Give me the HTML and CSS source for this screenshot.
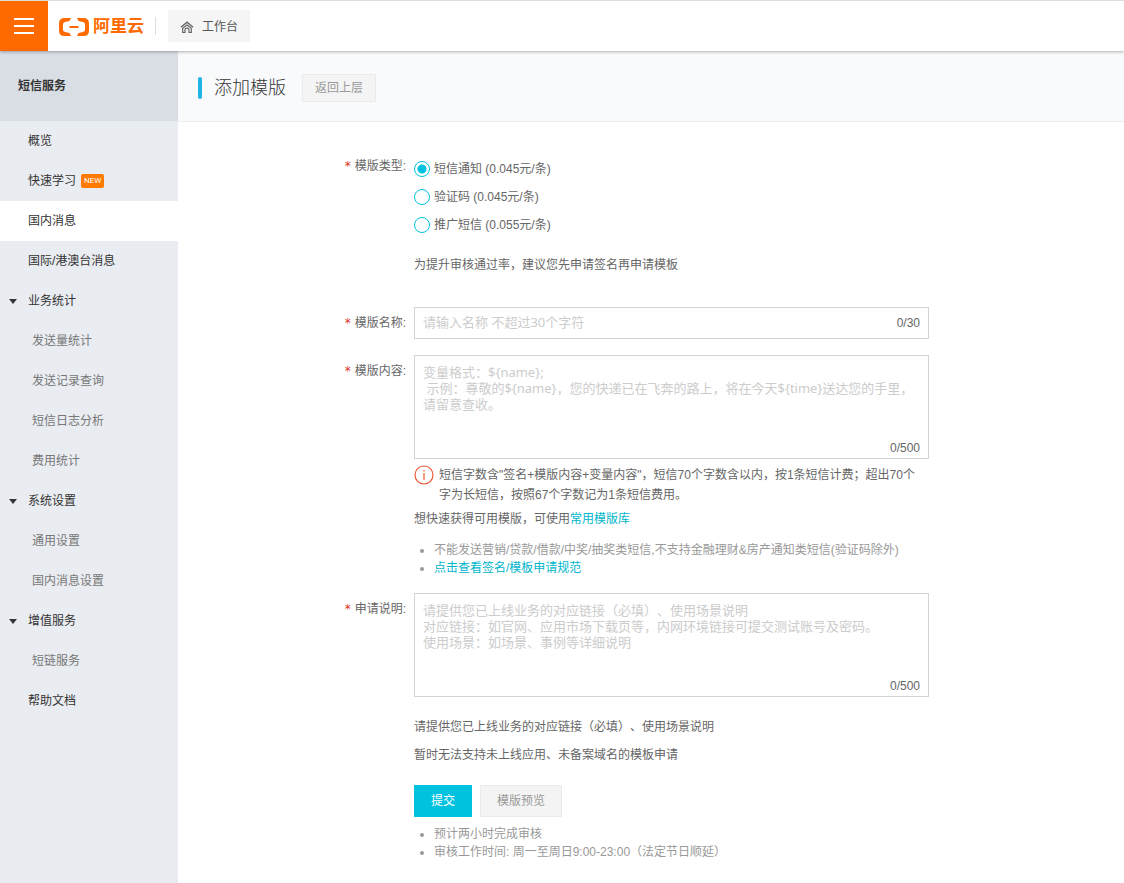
FILE: index.html
```html
<!DOCTYPE html>
<html lang="zh-CN">
<head>
<meta charset="utf-8">
<title>添加模版</title>
<link rel="stylesheet" href="styles.css">
</head>
<body>
<header class="topbar">
  <button class="menu-btn" type="button" aria-label="菜单">
    <svg width="20" height="18" viewBox="0 0 20 18"><path d="M0 2h20M0 9h20M0 16h20" stroke="#fff" stroke-width="2"/></svg>
  </button>
  <a class="brand" href="#">
    <svg width="30" height="18" viewBox="0 0 30 18" fill="#ff6a00">
      <path d="M12 0H5.500Q0 0 0 5.500V12.500Q0 18 5.500 18H12L10.500 15L6 14Q4 13.500 4 11.800V6.200Q4 4.500 6 4L10.500 3z"/>
      <path d="M18 0H24.500Q30 0 30 5.500V12.500Q30 18 24.500 18H18L19.500 15L24 14Q26 13.500 26 11.800V6.200Q26 4.500 24 4L19.500 3z"/>
      <path d="M10.500 8h9v2h-9z"/>
    </svg>
    <span>阿里云</span>
  </a>
  <span class="divider"></span>
  <a class="workbench" href="#">
    <svg width="14" height="14" viewBox="0 0 14 14" fill="none" stroke="#666">
      <path d="M1 7.300L7 2.200l6 5.100" stroke-width="1.500"/>
      <path d="M2.700 8.200v4.300H5V10.200Q5 8.200 7 8.200T9 10.200v2.300h2.300V8.200L7 4.900z" stroke-width="1.200"/>
    </svg>
    <span>工作台</span>
  </a>
</header>
<div class="layout">
  <nav class="sidebar">
    <h2 class="side-title">短信服务</h2>
    <a class="item" href="#">概览</a>
    <a class="item" href="#">快速学习<span class="new">NEW</span></a>
    <a class="item active" href="#">国内消息</a>
    <a class="item" href="#">国际/港澳台消息</a>
    <button class="item group" type="button">业务统计</button>
    <a class="item sub" href="#">发送量统计</a>
    <a class="item sub" href="#">发送记录查询</a>
    <a class="item sub" href="#">短信日志分析</a>
    <a class="item sub" href="#">费用统计</a>
    <button class="item group" type="button">系统设置</button>
    <a class="item sub" href="#">通用设置</a>
    <a class="item sub" href="#">国内消息设置</a>
    <button class="item group" type="button">增值服务</button>
    <a class="item sub" href="#">短链服务</a>
    <a class="item" href="#">帮助文档</a>
  </nav>
  <main class="main">
    <div class="page-head">
      <h1>添加模版</h1>
      <button class="btn btn-small" type="button">返回上层</button>
    </div>
    <form class="form">
      <div class="row" role="radiogroup" aria-labelledby="type-label">
        <span class="label label-type" id="type-label">模版类型:</span>
        <div class="field types">
          <label class="radio"><input type="radio" name="type" checked>短信通知 (0.045元/条)</label>
          <label class="radio"><input type="radio" name="type">验证码 (0.045元/条)</label>
          <label class="radio"><input type="radio" name="type">推广短信 (0.055元/条)</label>
          <p class="hint">为提升审核通过率，建议您先申请签名再申请模板</p>
        </div>
      </div>
      <div class="row row-name">
        <label class="label" for="name">模版名称:</label>
        <div class="field box">
          <input class="control" id="name" type="text" placeholder="请输入名称 不超过30个字符">
          <span class="count">0/30</span>
        </div>
      </div>
      <div class="row row-content">
        <label class="label" for="content">模版内容:</label>
        <div class="field">
          <div class="box">
            <textarea class="control area" id="content" placeholder="变量格式：${name};&#10; 示例：尊敬的${name}，您的快递已在飞奔的路上，将在今天${time}送达您的手里，请留意查收。"></textarea>
            <span class="count">0/500</span>
          </div>
          <div class="notice">
            <svg width="20" height="20" viewBox="0 0 20 20" fill="none" stroke="#f15533"><circle cx="10" cy="10" r="9" stroke-width="1.200"/><path d="M10 8v7M10 5v1.500" stroke-width="1.200"/></svg>
            <p>短信字数含"签名+模版内容+变量内容"，短信70个字数含以内，按1条短信计费；超出70个字为长短信，按照67个字数记为1条短信费用。</p>
          </div>
          <p class="library">想快速获得可用模版，可使用<a href="#">常用模版库</a></p>
          <ul class="notes">
            <li>不能发送营销/贷款/借款/中奖/抽奖类短信,不支持金融理财&amp;房产通知类短信(验证码除外)</li>
            <li><a href="#">点击查看签名/模板申请规范</a></li>
          </ul>
        </div>
      </div>
      <div class="row row-reason">
        <label class="label" for="reason">申请说明:</label>
        <div class="field">
          <div class="box">
            <textarea class="control area" id="reason" placeholder="请提供您已上线业务的对应链接（必填）、使用场景说明&#10;对应链接：如官网、应用市场下载页等，内网环境链接可提交测试账号及密码。&#10;使用场景：如场景、事例等详细说明"></textarea>
            <span class="count">0/500</span>
          </div>
          <div class="explain">
            <p>请提供您已上线业务的对应链接（必填）、使用场景说明</p>
            <p>暂时无法支持未上线应用、未备案域名的模板申请</p>
          </div>
          <div class="actions">
            <button class="btn btn-primary" type="submit">提交</button>
            <button class="btn" type="button">模版预览</button>
          </div>
          <ul class="notes">
            <li>预计两小时完成审核</li>
            <li>审核工作时间: 周一至周日9:00-23:00（法定节日顺延）</li>
          </ul>
        </div>
      </div>
    </form>
  </main>
</div>
</body>
</html>
```
FILE: styles.css
```css
* { box-sizing: border-box; }
body {
  margin: 0;
  min-height: 100vh;
  display: flex;
  flex-direction: column;
  font: 12px/20px "Liberation Sans", "Noto Sans CJK SC", sans-serif;
  text-spacing-trim: space-all;
  color: #666;
  background: #fff;
}
h1, h2, p, ul { margin: 0; padding: 0; }
a { color: #00b5cc; text-decoration: none; }
button, input, textarea { font: inherit; color: inherit; margin: 0; }
button { cursor: pointer; }

.topbar {
  position: relative;
  display: flex;
  align-items: center;
  height: 51px;
  border-top: 1px solid #ddd;
  background: #fff;
  box-shadow: 0 1px 3px rgba(0, 0, 0, .3);
}
.menu-btn {
  display: grid;
  place-items: center;
  width: 48px;
  align-self: stretch;
  padding: 0;
  border: 0;
  background: #ff6a00;
}
.brand {
  display: flex;
  align-items: center;
  gap: 4px;
  margin-left: 11px;
  padding-top: 1px;
  color: #ff6a00;
  font-size: 17px;
  font-weight: 700;
}
.divider { width: 1px; height: 18px; margin: 0 12px 0 11px; background: #ddd; }
.workbench {
  display: flex;
  align-items: center;
  gap: 8px;
  height: 32px;
  padding: 1px 12px 0;
  background: #f5f5f6;
  color: #555;
}

.layout { display: flex; flex: 1; }
.sidebar { flex: none; width: 178px; background: #e9ecf1; }
.side-title {
  height: 70px;
  padding-left: 18px;
  line-height: 70px;
  font-size: 12px;
  font-weight: 700;
  color: #333;
  background: #d9dde4;
}
.item {
  display: flex;
  align-items: center;
  width: 100%;
  height: 40px;
  padding: 0 0 0 28px;
  border: 0;
  background: none;
  color: #333;
}
.active { background: #fff; }
.sub { padding-left: 32px; color: #777; }
.group { padding-left: 9px; gap: 11px; }
.group::before {
  content: "";
  border: 4px solid transparent;
  border-top: 5px solid #333;
  border-bottom: 0;
}
.new {
  margin-left: 5px;
  padding: 0 3px;
  border-radius: 2px;
  background: #ff7a00;
  color: #fff;
  font: 8px/14px Roboto, sans-serif;
}

.main { flex: 1; min-width: 0; }
.page-head {
  display: flex;
  align-items: center;
  gap: 16px;
  height: 71px;
  padding: 4px 0 0 20px;
  border-bottom: 1px solid #e9ecf0;
  background: #f9fafc;
}
h1 {
  display: flex;
  align-items: center;
  gap: 12px;
  font-size: 18px;
  font-weight: 300;
  line-height: 28px;
  color: #333;
}
h1::before {
  content: "";
  width: 4px;
  height: 22px;
  border-radius: 2px;
  background: #22b4e6;
}
.btn {
  height: 32px;
  padding: 0 16px;
  border: 1px solid #ebebeb;
  background: #f4f4f4;
  color: #999;
}
.btn-small { height: 28px; padding: 0 12px; }
.btn-primary { border-color: #00c1de; background: #00c1de; color: #fff; }

.form { padding: 33px 2px 20px 0; }
.row { display: grid; grid-template-columns: 25% minmax(0, 515px); }
.label {
  padding: 6px 8px 0 0;
  text-align: right;
}
.label::before {
  content: "*";
  margin-right: 4px;
  color: #d93026;
  font-family: "DejaVu Sans", sans-serif;
}
.label-type { padding-top: 1px; }
.radio {
  display: flex;
  align-items: center;
  gap: 4px;
  height: 28px;
}
.radio input {
  appearance: none;
  width: 16px;
  height: 16px;
  border: 1px solid #00c1de;
  border-radius: 50%;
}
.radio input:checked { background: radial-gradient(circle, #00c1de 4px, transparent 5px); }
.hint { padding-top: 16px; }
.row-name { margin-top: 32px; }
.row-content { margin-top: 16px; }
.row-reason { margin-top: 16px; }
.box { position: relative; }
.control {
  display: block;
  width: 100%;
  height: 32px;
  padding: 0 8px 2px;
  border: 1px solid #d2d4d6;
  border-radius: 0;
  background: #fff;
  font: 13px/16px "Noto Sans", "Noto Sans CJK SC", sans-serif;
}
.control::placeholder { color: #ccc; opacity: 1; }
.area {
  height: 104px;
  padding: 8px;
  resize: none;
}
.count { position: absolute; right: 9px; bottom: 1px; }
.row-name .count { bottom: 6px; }
.notice { display: flex; gap: 5px; padding: 6px 8px 0 0; }
.notice svg { flex: none; }
.library { padding-top: 4px; }
.notes {
  padding: 12px 0 0 20px;
  line-height: 18px;
  color: #999;
}
.explain { padding-top: 16px; line-height: 28px; }
.actions { display: flex; gap: 8px; padding-top: 16px; }
.actions + .notes { padding-top: 8px; }
```
